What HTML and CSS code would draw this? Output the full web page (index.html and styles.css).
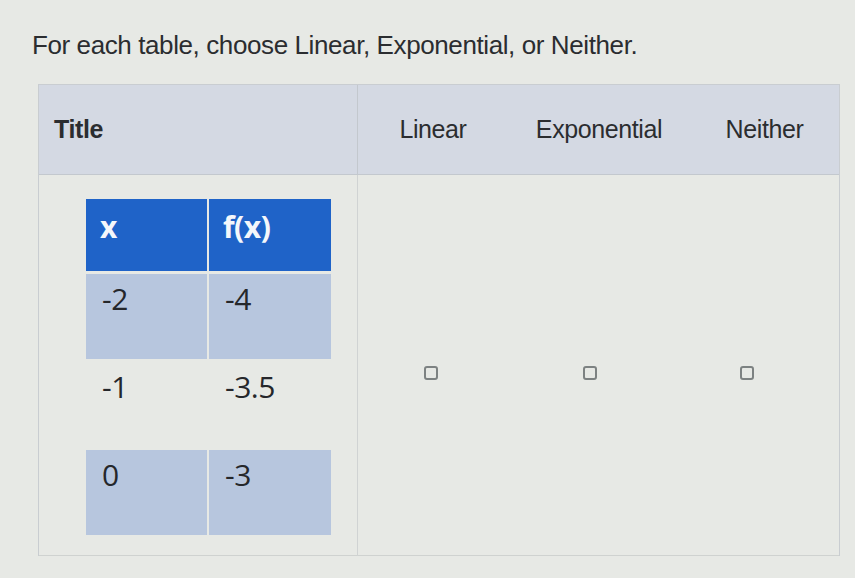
FILE: index.html
```html
<!DOCTYPE html>
<html lang="en">
<head>
<meta charset="utf-8">
<title>Linear, Exponential, or Neither</title>
<link rel="stylesheet" href="styles.css">
</head>
<body>
<p class="prompt">For each table, choose Linear, Exponential, or Neither.</p>
<div class="choice-table">
  <div class="head-cell title-cell">Title</div>
  <div class="head-cell opt">Linear</div>
  <div class="head-cell opt">Exponential</div>
  <div class="head-cell opt">Neither</div>

  <div class="body-cell data-cell">
    <div class="data">
      <div class="dh">x</div><div class="dh">f(x)</div>
      <div class="dc shade">-2</div><div class="dc shade">-4</div>
      <div class="dc">-1</div><div class="dc">-3.5</div>
      <div class="dc shade">0</div><div class="dc shade">-3</div>
    </div>
  </div>
  <div class="body-cell box-cell box-linear"><span class="box"></span></div>
  <div class="body-cell box-cell box-exp"><span class="box"></span></div>
  <div class="body-cell box-cell box-neither"><span class="box"></span></div>
</div>
</body>
</html>
```
FILE: styles.css
```css
html, body {
  margin: 0;
  padding: 0;
}
body {
  width: 855px;
  height: 578px;
  overflow: hidden;
  background: #e7e9e5;
  font-family: "Liberation Sans", Arial, sans-serif;
  color: #2b2d30;
}
.prompt {
  margin: 0;
  padding: 30px 0 0 32px;
  font-size: 26px;
  line-height: 30px;
  letter-spacing: -0.4px;
  white-space: nowrap;
}
.choice-table {
  margin: 24px 0 0 38px;
  width: 800px;
  display: grid;
  grid-template-columns: 319px 150px 182px 149px;
  grid-template-rows: 90px 381px;
  border: 1px solid #c9cdd1;
  border-bottom: none;
}
.head-cell {
  background: #d4d9e3;
  display: flex;
  align-items: center;
  font-size: 25px;
  letter-spacing: -0.4px;
  border-bottom: 1px solid #c3c8ce;
}
.title-cell {
  font-weight: bold;
  padding-left: 15px;
  border-right: 1px solid #c3c8ce;
}
.opt {
  justify-content: center;
}
.body-cell {
  border-bottom: 1px solid #cfd2d0;
}
.data-cell {
  padding: 24px 0 0 47px;
  border-right: 1px solid #d0d3d3;
}
.box-cell {
  display: flex;
  justify-content: flex-start;
  padding-top: 191px;
}
.box-linear { padding-left: 66px; }
.box-exp { padding-left: 75px; }
.box-neither { padding-left: 50px; }
.box {
  width: 14px;
  height: 14px;
  border: 2px solid #7d8282;
  border-radius: 3px;
  box-sizing: border-box;
}
.data {
  width: 243px;
  display: grid;
  grid-template-columns: 121px 122px;
  grid-auto-rows: 85px;
  grid-template-rows: 72px;
  gap: 3px 2px;
  font-family: "Open Sans", "Liberation Sans", sans-serif;
  font-size: 30px;
  letter-spacing: -0.5px;
  line-height: 36px;
}
.dh {
  background: #1f63c8;
  color: #f4f7fb;
  font-weight: bold;
  padding: 10px 0 0 14px;
}
.dc {
  padding: 7px 0 0 16px;
  color: #25272b;
}
.shade {
  background: #b7c6de;
}
```
